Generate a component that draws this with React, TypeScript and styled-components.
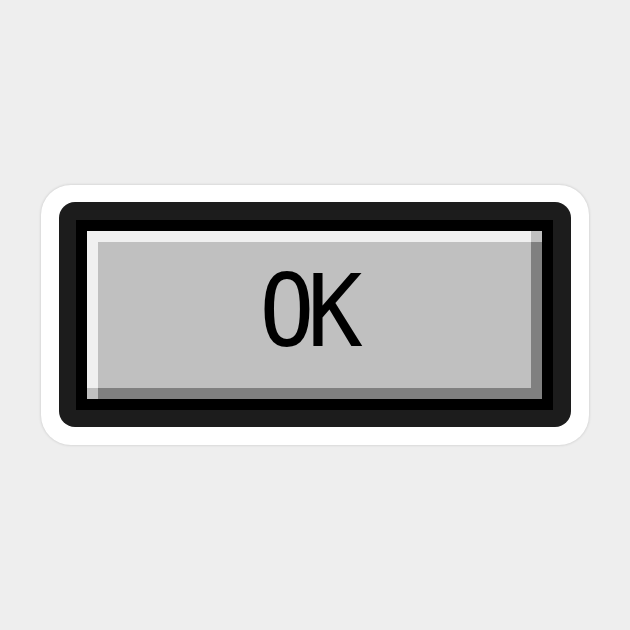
import { FC } from 'react';
import styled, { createGlobalStyle } from 'styled-components';

const GlobalStyle = createGlobalStyle`
	html, body {
		margin: 0;
		padding: 0;
		background: #eeeeee;
	}
	#root {
		width: 630px;
		height: 630px;
	}
`;

const Page = styled.div`
	width: 630px;
	height: 630px;
	display: flex;
	align-items: center;
	justify-content: center;
	background: #eeeeee;
`;

// white die-cut edge of the sticker
const Sticker = styled.div`
	box-sizing: border-box;
	width: 548px;
	height: 260px;
	padding: 17px 18px 18px;
	background: #ffffff;
	border-radius: 30px;
	box-shadow: 0 0 3px rgba(0, 0, 0, 0.18);
	display: flex;
`;

const Frame = styled.div`
	flex: 1;
	display: flex;
	padding: 18px 18px 17px 17px;
	background: #1c1c1c;
	border-radius: 16px;
`;

const Well = styled.div`
	flex: 1;
	display: flex;
	padding: 11px;
	background: #000000;
`;

const bevel = (light: string, dark: string, size: number) => `
	linear-gradient(${light}, ${light}) left top / calc(100% - ${size}px) ${size}px no-repeat,
	linear-gradient(${light}, ${light}) left top / ${size}px calc(100% - ${size}px) no-repeat,
	linear-gradient(${dark}, ${dark}) right bottom / ${size}px calc(100% - ${size}px) no-repeat,
	linear-gradient(${dark}, ${dark}) right bottom / calc(100% - ${size}px) ${size}px no-repeat
`;

const Button = styled.button<{ $edge: number }>`
	flex: 1;
	margin: 0;
	border: none;
	padding: 0 14px 6px 0;
	cursor: pointer;
	display: flex;
	align-items: center;
	justify-content: center;
	background: ${({ $edge }) => bevel('#f0f0f0', '#808080', $edge)}, #c0c0c0;
`;

const Label = styled.span`
	font-family: 'DejaVu Sans Mono', 'Liberation Mono', monospace;
	font-size: 100px;
	line-height: 1;
	letter-spacing: -8px;
	color: #000000;
	transform: scaleX(0.92);
`;

const App: FC = () => {
	return (
		<Page>
			<GlobalStyle />
			<Sticker>
				<Frame>
					<Well>
						<Button $edge={11}>
							<Label>OK</Label>
						</Button>
					</Well>
				</Frame>
			</Sticker>
		</Page>
	);
};

export default App;
